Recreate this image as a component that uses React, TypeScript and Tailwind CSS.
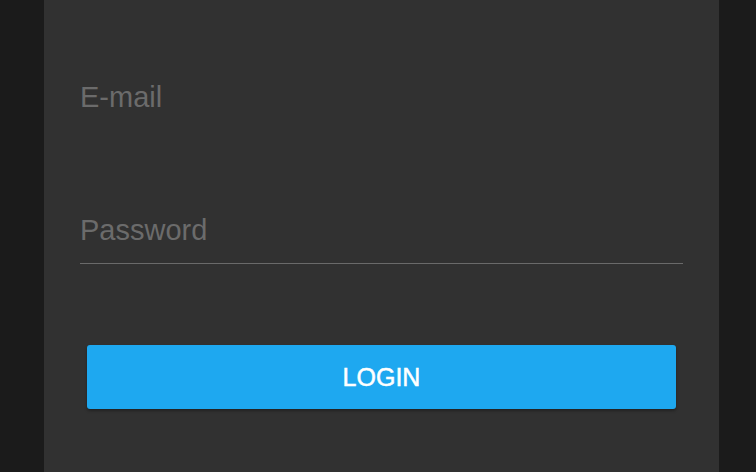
import React from "react";

export default function App() {
  return (
    <div className="w-[756px] h-[472px] bg-[#1b1b1b] flex" style={{ fontFamily: '"Liberation Sans", Arial, sans-serif' }}>
      <div className="ml-[44px] w-[675px] h-full bg-[#313131] px-[36px] flex flex-col">
        <div className="mt-[80px] h-[34px] leading-[34px] text-[29px] text-[#6b6b6b]">E-mail</div>
        <div className="mt-[99px] h-[34px] leading-[34px] text-[29px] text-[#6b6b6b]">Password</div>
        <div className="mt-[16px] h-px bg-[#6a6a6a]" />
        <button className="mt-[81px] mx-[7px] h-[64px] pt-[2px] rounded-[3px] bg-[#1ea8f0] text-white text-[25px] font-normal [-webkit-text-stroke:0.5px_white] shadow-[0_2px_3px_rgba(0,0,0,0.3)] flex items-center justify-center">
          LOGIN
        </button>
      </div>
    </div>
  );
}
